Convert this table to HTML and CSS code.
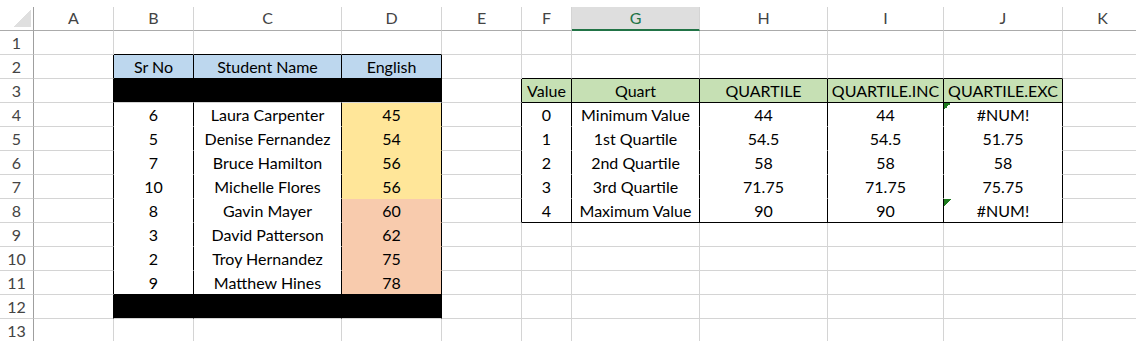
FILE: index.html
```html
<!DOCTYPE html>
<html lang="en">
<head>
  <meta charset="UTF-8">
  <meta name="viewport" content="width=device-width, initial-scale=1.0">
  <title>Quartile</title>
  <link rel="stylesheet" href="styles.css">
</head>
<body>
  <!-- SHEET GRID, filled by the script below -->
  <div class="sheet" id="sheet"></div>

  <script>
    // ===== DATA =====
    const cols = ['A', 'B', 'C', 'D', 'E', 'F', 'G', 'H', 'I', 'J', 'K'];
    const rowCount = 13;
    const activeCol = 'G';

    const students = [
      [6, 'Laura Carpenter', 45],
      [5, 'Denise Fernandez', 54],
      [7, 'Bruce Hamilton', 56],
      [10, 'Michelle Flores', 56],
      [8, 'Gavin Mayer', 60],
      [3, 'David Patterson', 62],
      [2, 'Troy Hernandez', 75],
      [9, 'Matthew Hines', 78]
    ];

    const quarts = [
      [0, 'Minimum Value', 44, 44, '#NUM!'],
      [1, '1st Quartile', 54.5, 54.5, 51.75],
      [2, '2nd Quartile', 58, 58, 58],
      [3, '3rd Quartile', 71.75, 71.75, 75.75],
      [4, 'Maximum Value', 90, 90, '#NUM!']
    ];

    // cells[ref] = { text, cls: [] }
    const cells = {};
    function set(ref, text, ...cls) {
      if (!cells[ref]) cells[ref] = { text: '', cls: [] };
      if (text !== null) cells[ref].text = text;
      cells[ref].cls.push(...cls);
    }

    // ===== STUDENT TABLE (B2:D12) =====
    set('B2', 'Sr No', 'hd'); set('C2', 'Student Name', 'hd'); set('D2', 'English', 'hd');
    ['B', 'C', 'D'].forEach(c => {
      set(c + '1', null, 'bb');
      set(c + '3', null, 'blk');
      set(c + '12', null, 'blk');
    });
    students.forEach((s, i) => {
      const r = i + 4;
      set('B' + r, s[0], 'fill');
      set('C' + r, s[1], 'fill');
      set('D' + r, s[2], s[2] < 60 ? 'low' : 'high');
      if (r === 11) ['B', 'C', 'D'].forEach(c => set(c + r, null, 'bb'));
    });
    for (let r = 2; r <= 12; r++) {
      set('A' + r, null, 'rb');
      ['B', 'C', 'D'].forEach(c => set(c + r, null, 'rb'));
    }
    ['B', 'C', 'D'].forEach(c => set(c + '2', null, 'bb'));

    // ===== QUARTILE TABLE (F3:J8) =====
    ['Value', 'Quart', 'QUARTILE', 'QUARTILE.INC', 'QUARTILE.EXC'].forEach((t, i) => {
      set(cols[5 + i] + '3', t, 'gh', 'bb');
      set(cols[5 + i] + '2', null, 'bb');
    });
    quarts.forEach((q, i) => {
      const r = i + 4;
      q.forEach((v, j) => set(cols[5 + j] + r, v, 'fill'));
      if (q[4] === '#NUM!') set('J' + r, null, 'err');
      if (r === 8) q.forEach((v, j) => set(cols[5 + j] + r, null, 'bb'));
    });
    for (let r = 3; r <= 8; r++) {
      set('E' + r, null, 'rb');
      ['F', 'G', 'H', 'I', 'J'].forEach(c => set(c + r, null, 'rb'));
    }

    // ===== DRAW GRID =====
    const sheet = document.getElementById('sheet');

    const corner = document.createElement('div');
    corner.className = 'cell ch corner';
    sheet.appendChild(corner);

    cols.forEach(c => {
      const el = document.createElement('div');
      el.className = 'cell ch' + (c === activeCol ? ' active' : '');
      el.textContent = c;
      sheet.appendChild(el);
    });

    for (let r = 1; r <= rowCount; r++) {
      const rh = document.createElement('div');
      rh.className = 'cell rh';
      rh.textContent = r;
      sheet.appendChild(rh);

      cols.forEach(c => {
        const el = document.createElement('div');
        const data = cells[c + r];
        el.className = 'cell' + (data ? ' ' + data.cls.join(' ') : '');
        if (data) el.textContent = data.text;
        sheet.appendChild(el);
      });
    }
  </script>
</body>
</html>
```

FILE: styles.css
```css
/* === SHEET === */
body {
  margin: 0;
  background: #fff;
  font-family: 'Lato', 'Open Sans', sans-serif;
  overflow: hidden;
}

.sheet {
  display: grid;
  grid-template-columns: 34px 80px 80px 148px 100px 80px 50px 128px 128px 116px 119px 80px;
  grid-template-rows: 31px;
  grid-auto-rows: 24px;
}

.cell {
  box-sizing: border-box;
  border-right: 1px solid #d4d4d4;
  border-bottom: 1px solid #d4d4d4;
  text-align: center;
  font-size: 16px;
  line-height: 24px;
  color: #000;
  white-space: nowrap;
  overflow: hidden;
}

/* === HEADERS === */
.ch {
  margin-top: 7px;
  color: #444;
  border-bottom-color: #ababab;
  line-height: 22px;
}

.ch.active {
  background: #dedede;
  color: #217346;
  border-bottom: 2px solid #217346;
}

.corner {
  border-right-color: #9f9f9f;
  background: linear-gradient(to bottom right, transparent 50%, #dfdfdf 50%) right 2px bottom 3px / 18px 18px no-repeat;
}

.rh {
  color: #444;
  border-right-color: #9f9f9f;
}

/* === FILLS === */
.fill {
  background: #fff;
  border-bottom-color: #fff;
}

.hd {
  background: #bdd7ee;
}

.gh {
  background: #c6e0b4;
}

.low {
  background: #ffe699;
  border-bottom-color: #ffe699;
}

.high {
  background: #f8cbad;
  border-bottom-color: #f8cbad;
}

.blk {
  background: #000;
}

/* === BORDERS === */
.rb {
  border-right-color: #000;
}

.bb {
  border-bottom-color: #000;
}

/* error marker in the corner */
.err {
  background: linear-gradient(to bottom right, #1e7b1e 50%, transparent 50%) 0 0 / 7px 7px no-repeat, #fff;
}
```
